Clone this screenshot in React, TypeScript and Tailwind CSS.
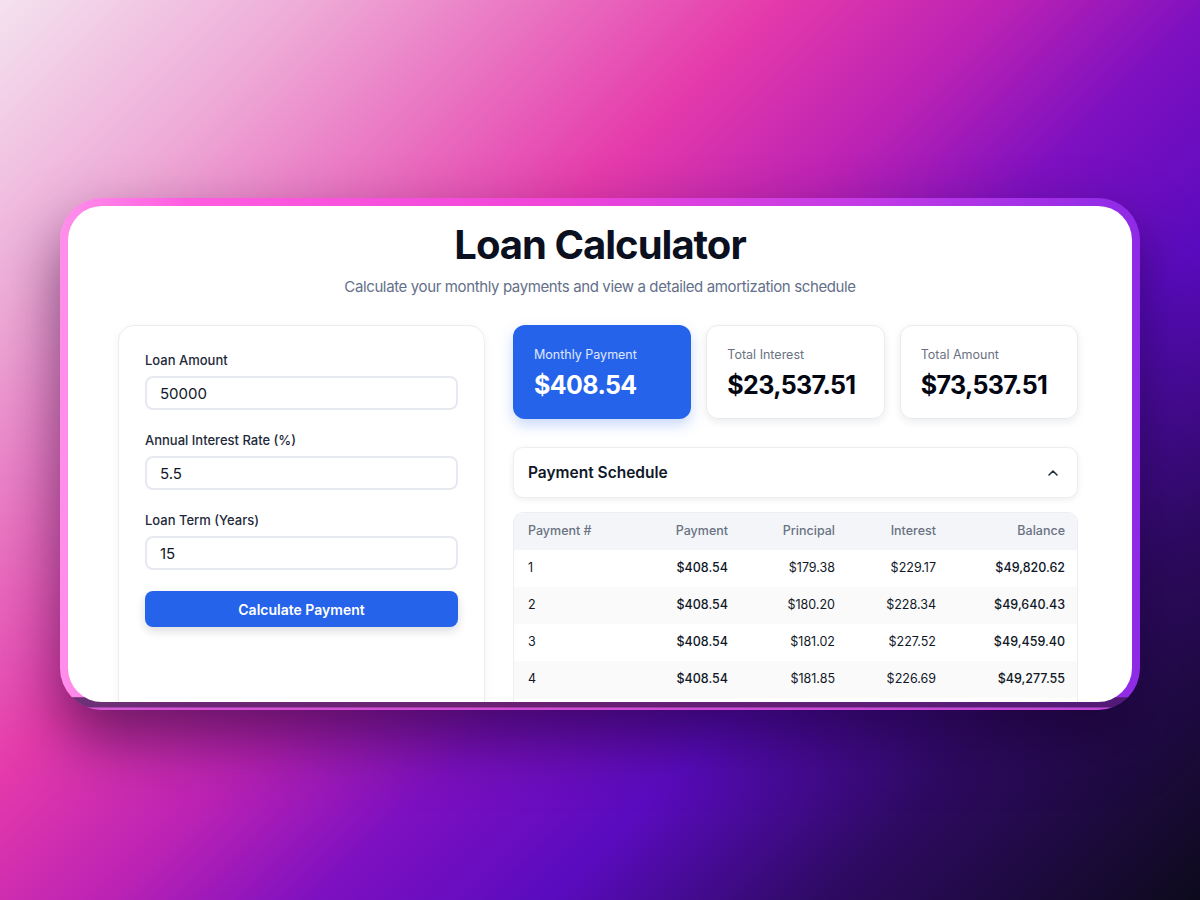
import React from "react";
import { ChevronUp } from "lucide-react";

const rows = [
  ["1", "$408.54", "$179.38", "$229.17", "$49,820.62"],
  ["2", "$408.54", "$180.20", "$228.34", "$49,640.43"],
  ["3", "$408.54", "$181.02", "$227.52", "$49,459.40"],
  ["4", "$408.54", "$181.85", "$226.69", "$49,277.55"],
];

function Field({ label, value, first }: { label: string; value: string; first?: boolean }) {
  return (
    <div className={first ? "" : "mt-[22px]"}>
      <label className="block text-[13px] leading-4 font-medium text-gray-800">{label}</label>
      <input
        readOnly
        value={value}
        className="mt-2 block h-[34px] w-full rounded-lg border-2 border-[#e6e9ef] bg-white px-[13px] text-[15px] text-gray-900 outline-none"
      />
    </div>
  );
}

function Stat({ label, value, primary }: { label: string; value: string; primary?: boolean }) {
  return (
    <div
      className={
        primary
          ? "h-[94px] rounded-xl bg-[#2563eb] px-[21px] pt-[22px] shadow-[0_6px_14px_rgba(37,99,235,0.25)]"
          : "h-[94px] rounded-xl border border-[#e8ebf0] bg-white px-[20px] pt-[21px] shadow-[0_3px_8px_rgba(15,23,42,0.08)]"
      }
    >
      <div className={primary ? "text-[12.5px] leading-4 text-white/85" : "text-[12.5px] leading-4 text-gray-500"}>{label}</div>
      <div
        className={
          primary
            ? "mt-[7px] text-[25px] leading-[30px] font-bold tracking-tight text-white"
            : "mt-[7px] text-[25px] leading-[30px] font-bold tracking-tight text-gray-950"
        }
      >
        {value}
      </div>
    </div>
  );
}

const cols = "grid-cols-[100px_100px_107px_101px_129px]";

export default function App() {
  return (
    <div
      className="relative h-[900px] w-[1200px] overflow-hidden px-[60px] pt-[198px] bg-[linear-gradient(135deg,#f4e2ef_0%,#eeaad7_15%,#e53aab_37%,#bb22b4_48%,#7d10c0_58%,#5a0bbf_69%,#2e0a62_82%,#0d0a1c_100%)]"
      style={{ fontFamily: "Inter, 'Noto Sans', sans-serif" }}
    >
      <div className="h-[512px] rounded-[42px] p-[8px] shadow-[0_30px_60px_rgba(20,0,40,0.55)] bg-[linear-gradient(to_bottom,transparent_97.4%,rgba(60,20,80,0.75)_97.6%,rgba(60,20,80,0.75)_99.4%,rgba(200,80,210,0.8)_99.6%),linear-gradient(to_right,#ff8fea_0%,#ff5ce0_12%,#f045d8_45%,#c23ae6_75%,#8e2ae6_100%)]">
        <div className="h-full overflow-hidden rounded-[34px] bg-white px-[50px] pt-[19px]">
          <h1 className="text-center text-[40px] leading-[40px] font-bold tracking-tight text-[#0b1020]">Loan Calculator</h1>
          <p className="mt-[10px] text-center text-[15px] leading-6 tracking-[-0.025em] text-[#64708a]">
            Calculate your monthly payments and view a detailed amortization schedule
          </p>

          <div className="mt-[26px] grid grid-cols-[367px_565px] gap-[28px]">
            <div className="h-[420px] rounded-2xl border border-[#eceef2] bg-white px-[26px] pt-[26px] shadow-[0_2px_10px_rgba(15,23,42,0.05)]">
              <Field first label="Loan Amount" value="50000" />
              <Field label="Annual Interest Rate (%)" value="5.5" />
              <Field label="Loan Term (Years)" value="15" />
              <button className="mt-[21px] h-[36px] w-full rounded-lg bg-[#2563eb] text-[14px] font-semibold text-white shadow-[0_4px_10px_rgba(15,23,42,0.15)]">
                Calculate Payment
              </button>
            </div>

            <div>
              <div className="grid grid-cols-3 gap-[15px]">
                <Stat primary label="Monthly Payment" value="$408.54" />
                <Stat label="Total Interest" value="$23,537.51" />
                <Stat label="Total Amount" value="$73,537.51" />
              </div>

              <div className="mt-[28px] flex h-[51px] items-center justify-between rounded-[10px] border border-[#eceef2] bg-white px-[14px] shadow-[0_2px_6px_rgba(15,23,42,0.07)]">
                <span className="text-[15.5px] font-semibold text-gray-900">Payment Schedule</span>
                <ChevronUp className="mr-[2px] h-4 w-4 text-gray-800" strokeWidth={2.25} />
              </div>

              <div className="mt-[14px] h-[260px] overflow-hidden rounded-[10px] border border-[#eceef2] bg-white">
                <div className={"grid h-[37px] items-center bg-[#f3f5f9] px-[14px] text-[12.5px] font-medium text-gray-500 " + cols}>
                  <div>Payment #</div>
                  <div className="text-right">Payment</div>
                  <div className="text-right">Principal</div>
                  <div className="text-right">Interest</div>
                  <div className="text-right">Balance</div>
                </div>
                {rows.map((r, i) => (
                  <div
                    key={r[0]}
                    className={
                      (i % 2 === 1 ? "bg-[#fafafa] " : "bg-white ") +
                      "grid h-[37px] items-center px-[14px] text-[12.5px] text-gray-900 " +
                      cols
                    }
                  >
                    <div>{r[0]}</div>
                    <div className="text-right font-medium">{r[1]}</div>
                    <div className="text-right">{r[2]}</div>
                    <div className="text-right">{r[3]}</div>
                    <div className="text-right font-medium">{r[4]}</div>
                  </div>
                ))}
              </div>
            </div>
          </div>
        </div>
      </div>
    </div>
  );
}
